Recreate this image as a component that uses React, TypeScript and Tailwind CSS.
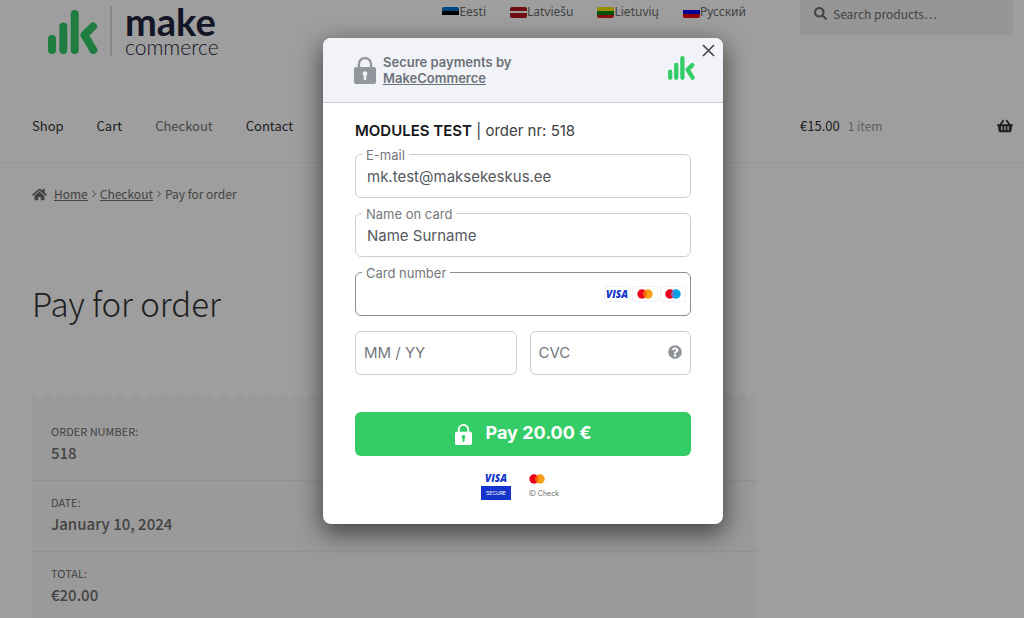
import type {ReactNode} from "react";
import {FaHome, FaQuestionCircle, FaSearch, FaShoppingBasket} from "react-icons/fa";
import {clsx} from "clsx";

interface Language {
    name: string;
    stripes: { color: string; height: number }[];
}

const languages: Language[] = [
    {
        name: "Eesti",
        stripes: [
            {color: "#0072ce", height: 4},
            {color: "#000000", height: 4},
            {color: "#ffffff", height: 3},
        ],
    },
    {
        name: "Latviešu",
        stripes: [
            {color: "#b3151c", height: 4},
            {color: "#ffffff", height: 2},
            {color: "#b3151c", height: 5},
        ],
    },
    {
        name: "Lietuvių",
        stripes: [
            {color: "#f0e600", height: 4},
            {color: "#00850a", height: 4},
            {color: "#e0161c", height: 3},
        ],
    },
    {
        name: "Русский",
        stripes: [
            {color: "#ffffff", height: 3},
            {color: "#0000f0", height: 4},
            {color: "#e8000c", height: 4},
        ],
    },
];

const navLinks = [
    {label: "Shop", active: false},
    {label: "Cart", active: false},
    {label: "Checkout", active: true},
    {label: "Contact", active: false},
];

const orderDetails = [
    {label: "Order number:", value: "518"},
    {label: "Date:", value: "January 10, 2024"},
    {label: "Total:", value: "€20.00"},
];

function Flag({stripes}: Pick<Language, "stripes">) {
    return (
        <span className="flex h-[11px] w-[17px] flex-col overflow-hidden rounded-xs">
            {stripes.map((stripe, index) => (
                <span
                    key={index}
                    className="w-full"
                    style={{height: stripe.height, backgroundColor: stripe.color}}
                />
            ))}
        </span>
    );
}

function BrandMark({className}: { className?: string }) {
    return (
        <svg
            viewBox="0 0 50 44"
            fill="none"
            stroke="#33cc66"
            strokeWidth="8"
            strokeLinecap="round"
            strokeLinejoin="round"
            className={className}
            aria-hidden="true">
            <path d="M4 29v11M15.3 16.400v23.600M26.700 4v36"/>
            <path d="M45 16.500 36.500 25l8.900 15"/>
        </svg>
    );
}

function LogoFull() {
    return (
        <a href="#" className="flex items-start" aria-label="MakeCommerce">
            <BrandMark className="mt-2.5 h-11 w-[50px]"/>
            <span className="mt-1.5 ml-3 h-[50px] w-0.5 bg-[#dcdcdc]"/>
            <span className="ml-[13px] flex flex-col font-['Lato',sans-serif] text-[#21243d]">
                <span className="text-[38px] leading-[42px] font-bold">make</span>
                <span className="text-[21px] leading-[10px] font-light">commerce</span>
            </span>
        </a>
    );
}

function LockIcon({className}: { className?: string }) {
    return (
        <svg viewBox="0 0 22 27" className={className} aria-hidden="true">
            <path
                d="M4.900 12V7.200a6.100 6.100 0 0 1 12.200 0V12"
                fill="none"
                stroke="currentColor"
                strokeWidth="2.400"
            />
            <path
                fill="currentColor"
                fillRule="evenodd"
                d="M2 10h18a2 2 0 0 1 2 2v13a2 2 0 0 1-2 2H2a2 2 0 0 1-2-2V12a2 2 0 0 1 2-2Zm9 4.300a2.400 2.400 0 0 0-1.300 4.400V22a1.300 1.300 0 0 0 2.600 0v-3.300A2.400 2.400 0 0 0 11 14.300Z"
            />
        </svg>
    );
}

function VisaWordmark({className}: { className?: string }) {
    return (
        <span
            className={clsx(
                "font-['Open_Sans',sans-serif] font-extrabold text-[#1434cb] italic",
                className,
            )}>
            VISA
        </span>
    );
}

function TwoCircles({left, right, middle}: { left: string; right: string; middle: string }) {
    return (
        <svg viewBox="0 0 16 10" className="h-2.5 w-4" aria-hidden="true">
            <circle cx="5" cy="5" r="4.700" fill={left}/>
            <circle cx="11" cy="5" r="4.700" fill={right}/>
            <path d="M8 1.400a4.700 4.700 0 0 1 0 7.200a4.700 4.700 0 0 1 0-7.200Z" fill={middle}/>
        </svg>
    );
}

function CardBadge({children}: { children: ReactNode }) {
    return (
        <span
            className="flex h-4 w-[26px] items-center justify-center rounded-xs
            border border-[#eff1f6] bg-white">
            {children}
        </span>
    );
}

interface FieldProps {
    id: string;
    label: string;
    value?: string;
    focused?: boolean;
    children?: ReactNode;
}

function Field({id, label, value, focused, children}: FieldProps) {
    return (
        <div
            className={clsx(
                "relative flex h-11 items-center rounded-md border bg-white pr-1",
                focused ? "border-[#8b8d92]" : "border-[#cbced8]",
            )}>
            <label
                htmlFor={id}
                className="absolute -top-2 left-1.5 bg-white px-1 text-[13px] leading-4 text-[#74777c]">
                {label}
            </label>
            <input
                id={id}
                defaultValue={value}
                className="h-full min-w-0 flex-1 bg-transparent pl-[11px] text-[15px]
                text-[#55585c] outline-none"
            />
            {children}
        </div>
    );
}

function ShortField({id, placeholder, children}: { id: string; placeholder: string; children?: ReactNode }) {
    return (
        <div className="flex h-11 items-center rounded-md border border-[#cbced8] bg-white pr-2 pb-0.5">
            <input
                id={id}
                aria-label={placeholder}
                placeholder={placeholder}
                className="h-full min-w-0 flex-1 bg-transparent pl-2 text-[15px] text-[#55585c]
                outline-none placeholder:text-[#74777c]"
            />
            {children}
        </div>
    );
}

function ShopHeader() {
    return (
        <header className="border-b border-[#f0f0f0] pr-[11px] pl-8">
            <div className="flex h-[90px] items-start">
                <div className="flex flex-1 items-start justify-between pl-4">
                    <LogoFull/>
                    <ul className="mr-[54px] flex gap-6 font-['Noto_Sans',sans-serif]">
                        {languages.map((language) => (
                            <li key={language.name}>
                                <a href="#" className="flex items-center text-xs leading-6">
                                    <Flag stripes={language.stripes}/>
                                    {language.name}
                                </a>
                            </li>
                        ))}
                    </ul>
                </div>
                <form className="flex h-[35px] w-[213px] items-center gap-1.5 bg-[#f2f2f2] pb-2 pl-3.5">
                    <FaSearch className="size-[13px]"/>
                    <input
                        type="search"
                        aria-label="Search products"
                        placeholder="Search products…"
                        className="min-w-0 flex-1 bg-transparent text-xs outline-none
                        placeholder:text-[#6d6d6d]"
                    />
                </form>
            </div>
            <div className="flex h-[72px] items-center text-[#333333]">
                <nav className="flex flex-1 gap-[33px] text-[13px]">
                    {navLinks.map((link) => (
                        <a key={link.label} href="#" className={clsx(link.active && "text-[#737373]")}>
                            {link.label}
                        </a>
                    ))}
                </nav>
                <a href="#" className="flex w-[213px] items-center gap-2 text-[13px]">
                    €15.00
                    <span className="text-xs text-[#9a9a9a]">1 item</span>
                    <FaShoppingBasket className="ml-auto size-4"/>
                </a>
            </div>
        </header>
    );
}

function BreadcrumbArrow() {
    return (
        <svg viewBox="0 0 12 10" className="h-2.5 w-3" fill="none" stroke="#b0b0b0" strokeWidth="1.300">
            <path d="m4.500 2 3 3-3 3"/>
        </svg>
    );
}

function Breadcrumb() {
    return (
        <nav className="flex items-center text-xs leading-5" aria-label="Breadcrumb">
            <FaHome className="mr-[7px] size-[15px]"/>
            <a href="#" className="underline">Home</a>
            <BreadcrumbArrow/>
            <a href="#" className="underline">Checkout</a>
            <BreadcrumbArrow/>
            <span>Pay for order</span>
        </nav>
    );
}

function OrderSummary() {
    return (
        <section className="mt-[65px]">
            <svg className="block h-2 w-full" aria-hidden="true">
                <defs>
                    <pattern id="zigzag" width="14.800" height="8" patternUnits="userSpaceOnUse">
                        <path d="M0 0 7.400 7 14.800 0V8H0Z" fill="#f8f8f8"/>
                    </pattern>
                </defs>
                <rect width="100%" height="8" fill="url(#zigzag)"/>
            </svg>
            <ul className="bg-[#f8f8f8] pt-2.5">
                {orderDetails.map((detail) => (
                    <li
                        key={detail.label}
                        className="border-b border-dotted border-[#e2dfe1] px-[19px] pt-[11px] pb-[15px]">
                        <span className="block text-[11px] leading-5 uppercase">{detail.label}</span>
                        <strong className="block text-[15px] leading-6 font-medium">{detail.value}</strong>
                    </li>
                ))}
            </ul>
        </section>
    );
}

function PaymentDialog() {
    return (
        <div
            role="dialog"
            aria-label="Secure payments by MakeCommerce"
            className="relative w-[400px] overflow-hidden rounded-lg bg-white
            font-['Inter',sans-serif] shadow-[0_8px_24px_2px_rgba(0,0,0,0.55)]">
            <button
                type="button"
                aria-label="Close"
                className="absolute top-1.5 right-2 text-[#3c3e42]">
                <svg viewBox="0 0 13 13" className="size-[13px]" stroke="currentColor" strokeWidth="1.500">
                    <path d="m1 1 11 11M12 1 1 12"/>
                </svg>
            </button>
            <div
                className="flex h-[65px] items-center border-b border-[#c9cacd] bg-[#f2f3f8]
                pr-7 pl-[31px]">
                <LockIcon className="h-[27px] w-[22px] text-[#93979d]"/>
                <p className="ml-[7px] text-[13px] leading-4 font-semibold text-[#6d7278]">
                    Secure payments by
                    <br/>
                    <a href="#" className="underline">MakeCommerce</a>
                </p>
                <BrandMark className="mb-1 ml-auto h-6 w-[27px]"/>
            </div>
            <form className="flex flex-col gap-[15px] px-8 pt-5 pb-6">
                <p className="text-[15px] leading-4 text-[#3c3e41]">
                    <strong className="font-semibold text-[#151618]">MODULES TEST</strong> | order nr: 518
                </p>
                <Field id="email" label="E-mail" value="mk.test@maksekeskus.ee"/>
                <Field id="card-name" label="Name on card" value="Name Surname"/>
                <Field id="card-number" label="Card number" focused>
                    <span className="flex gap-0.5">
                        <CardBadge>
                            <VisaWordmark className="text-[10px] leading-3"/>
                        </CardBadge>
                        <CardBadge>
                            <TwoCircles left="#eb001b" right="#f79e1b" middle="#ff5f00"/>
                        </CardBadge>
                        <CardBadge>
                            <TwoCircles left="#eb001b" right="#00a2e5" middle="#7375cf"/>
                        </CardBadge>
                    </span>
                </Field>
                <div className="grid grid-cols-2 gap-[13px]">
                    <ShortField id="expiry" placeholder="MM / YY"/>
                    <ShortField id="cvc" placeholder="CVC">
                        <FaQuestionCircle className="size-3.5 text-[#8f9398]"/>
                    </ShortField>
                </div>
                <button
                    type="button"
                    className="mt-[22px] flex h-11 items-center justify-center gap-3.5 rounded-md
                    bg-[#33cc66] pb-0.5 text-lg font-bold text-white">
                    <LockIcon className="mt-0.5 h-[21px] w-[17px]"/>
                    Pay 20.00 €
                </button>
                <div className="flex h-[29px] justify-center gap-[18px] pt-px pr-1.5">
                    <div className="flex w-[30px] flex-col items-center gap-0.5">
                        <VisaWordmark className="text-[10px] leading-3"/>
                        <span
                            className="flex h-3.5 w-full items-center justify-center bg-[#1434cb]
                            text-[5px] leading-none text-white">
                            SECURE
                        </span>
                    </div>
                    <div className="flex flex-col items-start gap-[5px] pt-0.5">
                        <TwoCircles left="#eb001b" right="#f79e1b" middle="#ff5f00"/>
                        <span className="text-[7px] leading-[10px] text-[#6d6d6d]">ID Check</span>
                    </div>
                </div>
            </form>
        </div>
    );
}

export default function App() {
    return (
        <div
            className="relative h-screen overflow-hidden bg-white
            font-['Noto_Sans_CJK_SC','Noto_Sans',sans-serif] text-[#6d6d6d]">
            <ShopHeader/>
            <div className="flex gap-[43px] pr-[11px] pl-8">
                <main className="flex-1 pt-[21px]">
                    <Breadcrumb/>
                    <h1 className="mt-[75px] text-[33px] leading-[48px] font-light text-[#333333]">
                        Pay for order
                    </h1>
                    <OrderSummary/>
                </main>
                <aside className="w-[213px]"/>
            </div>
            <div className="absolute inset-0 flex items-start justify-center bg-black/38 pt-[38px] pl-[22px]">
                <PaymentDialog/>
            </div>
        </div>
    );
}
